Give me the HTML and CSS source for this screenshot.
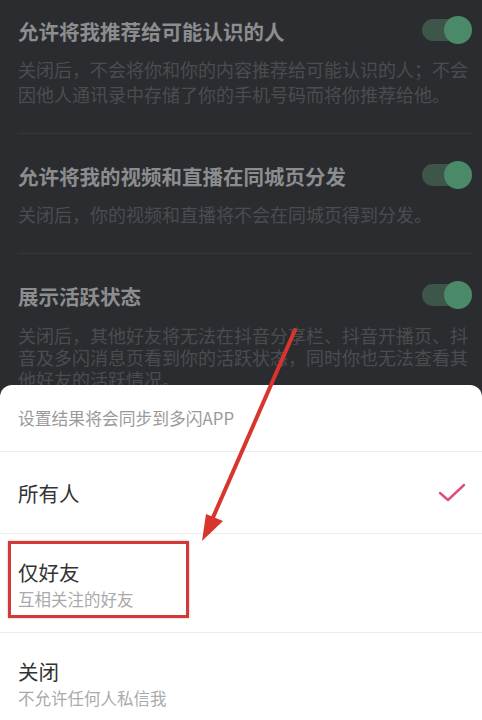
FILE: index.html
```html
<!DOCTYPE html>
<html lang="zh-CN">
<head>
<meta charset="utf-8">
<link rel="stylesheet" href="styles.css">
</head>
<body>
<div class="screen">
  <div class="settings">
    <div class="item first">
      <div class="row">
        <div class="title">允许将我推荐给可能认识的人</div>
        <div class="toggle"><span class="track"></span><span class="knob"></span></div>
      </div>
      <div class="desc">关闭后，不会将你和你的内容推荐给可能认识的人；不会因他人通讯录中存储了你的手机号码而将你推荐给他。</div>
    </div>
    <div class="item">
      <div class="row">
        <div class="title">允许将我的视频和直播在同城页分发</div>
        <div class="toggle"><span class="track"></span><span class="knob"></span></div>
      </div>
      <div class="desc">关闭后，你的视频和直播将不会在同城页得到分发。</div>
    </div>
    <div class="item">
      <div class="row">
        <div class="title">展示活跃状态</div>
        <div class="toggle"><span class="track"></span><span class="knob"></span></div>
      </div>
      <div class="desc tight">关闭后，其他好友将无法在抖音分享栏、抖音开播页、抖音及多闪消息页看到你的活跃状态，同时你也无法查看其他好友的活跃情况。</div>
    </div>
  </div>
  <div class="sheet">
    <div class="sheet-head">设置结果将会同步到多闪APP</div>
    <div class="option single">
      <div class="opt-title">所有人</div>
      <svg class="check" width="28" height="22" viewBox="0 0 28 22"><polyline points="2,12 10,19 26,4" fill="none" stroke="#d9507c" stroke-width="2.4" stroke-linecap="round" stroke-linejoin="round"/></svg>
    </div>
    <div class="option">
      <div class="opt-title">仅好友</div>
      <div class="opt-sub">互相关注的好友</div>
      <div class="highlight"></div>
    </div>
    <div class="option last">
      <div class="opt-title">关闭</div>
      <div class="opt-sub">不允许任何人私信我</div>
    </div>
  </div>
  <svg class="arrow" width="482" height="720" viewBox="0 0 482 720">
    <line x1="295" y1="330" x2="211" y2="522" stroke="#d8352c" stroke-width="4" stroke-linecap="round"/>
    <polygon points="202,541 206,514 223,521" fill="#d8352c"/>
  </svg>
</div>
</body>
</html>
```
FILE: styles.css
```css
html, body {
  margin: 0;
  padding: 0;
  background: #2a2c30;
}
.screen {
  position: relative;
  width: 482px;
  height: 720px;
  overflow: hidden;
  display: flex;
  flex-direction: column;
  font-family: "Noto Sans CJK SC", "Noto Sans", sans-serif;
}
.settings {
  flex: 1;
  min-height: 0;
  overflow: hidden;
  padding-left: 18px;
  padding-right: 9px;
}
.item {
  padding: 28px 0 26px;
  border-bottom: 1px solid #35373b;
  margin-right: 1px;
}
.item.first {
  padding-top: 17px;
}
.row {
  display: flex;
  align-items: center;
  justify-content: space-between;
  height: 28px;
}
.title {
  font-size: 20.5px;
  font-weight: 700;
  color: #8c8d8f;
  line-height: 28px;
}
.toggle {
  position: relative;
  width: 50px;
  height: 28px;
  margin-top: -2px;
}
.track {
  position: absolute;
  left: 0;
  top: 3px;
  width: 42px;
  height: 22px;
  border-radius: 11px;
  background: #3d5649;
}
.knob {
  position: absolute;
  right: 0;
  top: 0;
  width: 28px;
  height: 28px;
  border-radius: 50%;
  background: #4b8a69;
}
.desc {
  margin-top: 12px;
  font-size: 18px;
  line-height: 25px;
  color: #4a4c50;
  padding-right: 2px;
}
.desc.tight {
  line-height: 22px;
  margin-top: 14px;
}
.sheet {
  flex-shrink: 0;
  height: 335px;
  background: #ffffff;
  border-radius: 12px 12px 0 0;
  overflow: hidden;
}
.sheet-head {
  padding: 22px 18px;
  font-size: 16.8px;
  line-height: 22px;
  color: #9a9a9a;
  border-bottom: 1px solid #ececec;
}
.option {
  position: relative;
  padding: 24px 18px 22px;
  border-bottom: 1px solid #ececec;
}
.option.single {
  display: flex;
  align-items: center;
  justify-content: space-between;
  padding: 27px 16px 26px 18px;
}
.option.last {
  border-bottom: none;
}
.opt-title {
  font-size: 20.5px;
  line-height: 28px;
  color: #333333;
}
.opt-sub {
  margin-top: 2px;
  font-size: 16.5px;
  line-height: 22px;
  color: #aaaaaa;
}
.check {
  display: block;
  margin-top: -2px;
}
.highlight {
  position: absolute;
  left: 8px;
  top: 7px;
  width: 175px;
  height: 71px;
  border: 3px solid #d23a3a;
  box-shadow: 0 0 2px rgba(160, 40, 40, 0.4);
}
.arrow {
  position: absolute;
  left: 0;
  top: 0;
  pointer-events: none;
}
```
